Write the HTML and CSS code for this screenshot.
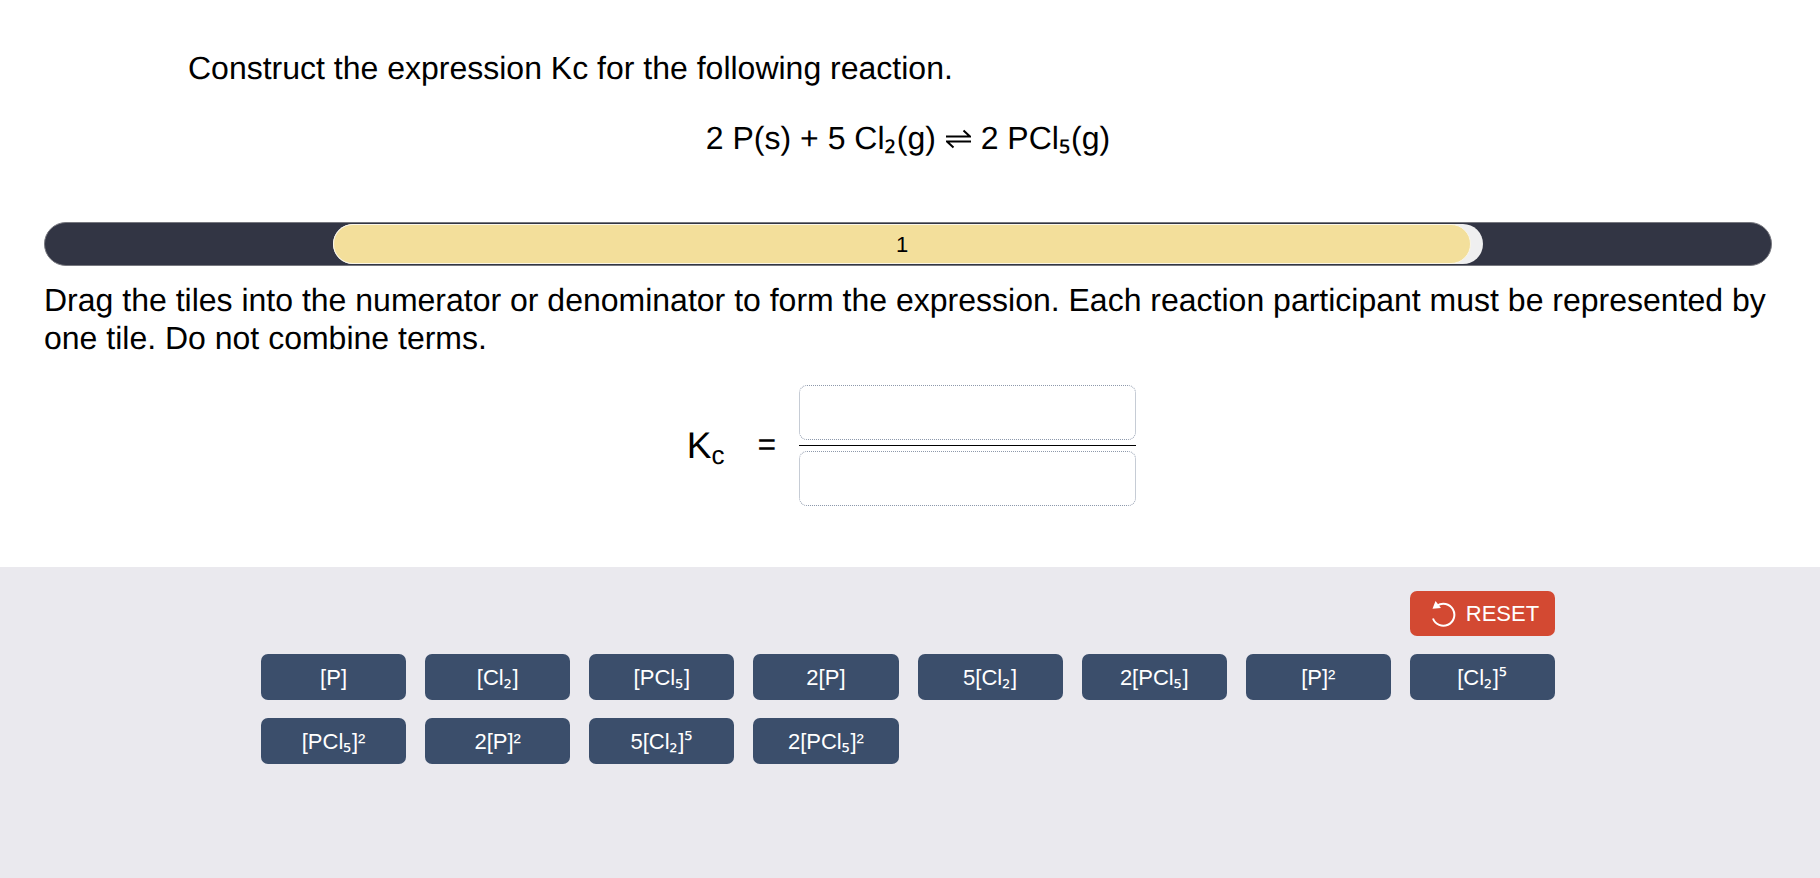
FILE: index.html
```html
<!DOCTYPE html>
<html lang="en">
<head>
<meta charset="utf-8">
<meta name="viewport" content="width=device-width, initial-scale=1">
<title>Equilibrium expression</title>
<link rel="stylesheet" href="styles.css">
</head>
<body>
<main class="problem">
  <header class="question">
    <h1 class="prompt">Construct the expression Kc for the following reaction.</h1>
    <p class="equation">2 P(s) + 5 Cl<span class="num">₂</span>(g) <svg class="equilibrium" viewBox="0 0 25 20" role="img" aria-label="in equilibrium with"><path d="M0 7.5H24L17.5 1.5M25 12.5H1L7.5 18.5"/></svg> 2 PCl<span class="num">₅</span>(g)</p>
  </header>
  <nav class="steps" aria-label="Steps">
    <div class="step-track"><button class="step" type="button">1</button></div>
  </nav>
  <p class="directions">Drag the tiles into the numerator or denominator to form the expression. Each reaction participant must be represented by one tile. Do not combine terms.</p>
  <section class="expression" aria-label="Expression">
    <div class="constant">K<sub class="constant-sub">c</sub></div>
    <div class="equals">=</div>
    <div class="fraction">
      <div class="slot" aria-label="Numerator"></div>
      <div class="fraction-bar"></div>
      <div class="slot" aria-label="Denominator"></div>
    </div>
  </section>
</main>
<section class="tray" aria-label="Tiles">
  <div class="tiles">
    <button class="reset" type="button">
      <svg class="reset-icon" viewBox="0 0 24 26" aria-hidden="true"><path class="reset-arc" d="M5 4.8A11 11 0 1 1 1 17.5"/><path class="reset-head" d="M3.5 0L0.5 7.8L9 7Z"/></svg>
      RESET
    </button>
    <button class="tile" type="button">[P]</button>
    <button class="tile" type="button">[Cl<span class="num">₂</span>]</button>
    <button class="tile" type="button">[PCl<span class="num">₅</span>]</button>
    <button class="tile" type="button">2[P]</button>
    <button class="tile" type="button">5[Cl<span class="num">₂</span>]</button>
    <button class="tile" type="button">2[PCl<span class="num">₅</span>]</button>
    <button class="tile" type="button">[P]²</button>
    <button class="tile" type="button">[Cl<span class="num">₂</span>]<span class="num">⁵</span></button>
    <button class="tile" type="button">[PCl<span class="num">₅</span>]²</button>
    <button class="tile" type="button">2[P]²</button>
    <button class="tile" type="button">5[Cl<span class="num">₂</span>]<span class="num">⁵</span></button>
    <button class="tile" type="button">2[PCl<span class="num">₅</span>]²</button>
  </div>
</section>
</body>
</html>
```
FILE: styles.css
```css
* {
  box-sizing: border-box;
}

body {
  display: flex;
  flex-direction: column;
  min-height: 100vh;
  margin: 0;
  background: #fff;
  color: #000;
  font-family: "Liberation Sans", Arial, sans-serif;
  font-size: 32px;
  line-height: 38px;
  text-rendering: geometricPrecision;
}

button {
  padding: 0;
  border: 0;
  font: inherit;
  font-size: 22px;
  line-height: 30px;
  cursor: pointer;
}

.problem {
  padding: 49px 48px 61px 44px;
}

.question {
  padding: 0 144px;
}

.prompt {
  margin: 0 0 32px;
  font-size: 32px;
  font-weight: 400;
}

.equation {
  margin: 0 0 65px;
  text-align: center;
}

.num {
  padding-right: 1px;
  font-family: "Noto Sans", sans-serif;
  line-height: 1;
}

.equilibrium {
  width: 25px;
  height: 20px;
  margin: 0 1px;
  fill: none;
  stroke: #000;
  stroke-width: 2;
}

.steps {
  display: flex;
  justify-content: center;
  padding: 1px;
  border: 1px solid #77787f;
  border-radius: 22px;
  background: #323544;
}

.step-track {
  display: flex;
  width: 1150px;
  max-width: 100%;
  padding-right: 12px;
  border-radius: 20px;
  background: #efeff0;
}

.step {
  flex: 1;
  height: 40px;
  padding-top: 2px;
  border: 1px solid #faf6e8;
  border-radius: 20px;
  background: #f3df9b;
  color: #000;
}

.directions {
  margin: 15px 0 28px;
}

.expression {
  display: flex;
  align-items: center;
  justify-content: center;
  padding-left: 7px;
}

.constant {
  padding-top: 4px;
  margin-right: 33px;
  font-size: 37px;
}

.constant-sub {
  font-size: 26px;
  line-height: 1;
  vertical-align: -6px;
}

.equals {
  padding-bottom: 4px;
  margin-right: 23px;
}

.fraction {
  display: flex;
  flex-direction: column;
  gap: 5px;
  width: 337px;
}

.slot {
  height: 55px;
  border: 1px dotted #8e99ab;
  border-radius: 8px;
}

.fraction-bar {
  height: 1px;
  background: #000;
}

.tray {
  flex: 1;
  padding: 24px 265px 24px 261px;
  background: #eae9ee;
}

.tiles {
  display: grid;
  grid-template-columns: repeat(8, minmax(0, 1fr));
  gap: 18px 19px;
}

.reset,
.tile {
  height: 46px;
  border-radius: 7px;
  color: #fff;
}

.reset {
  display: flex;
  grid-column: 8;
  align-items: center;
  justify-content: center;
  gap: 10px;
  padding-left: 6px;
  height: 45px;
  background: #d34932;
}

.reset-icon {
  width: 24px;
  height: 26px;
  fill: none;
}

.reset-arc {
  stroke: #fff;
  stroke-width: 2;
}

.reset-head {
  fill: #fff;
}

.tile {
  padding-top: 2px;
  background: #3b4e6b;
}
```
